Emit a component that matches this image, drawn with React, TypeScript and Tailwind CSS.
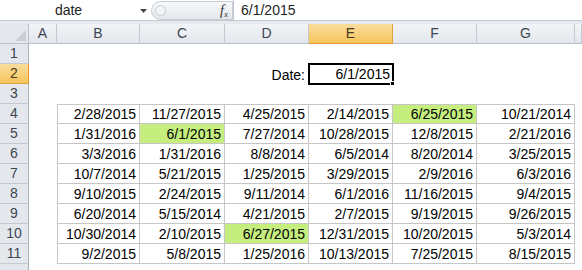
const font = { fontFamily: '"Liberation Sans", Arial, sans-serif' }

const cols = ['A', 'B', 'C', 'D', 'E', 'F', 'G', 'H']

const data: string[][] = [
  ['2/28/2015', '11/27/2015', '4/25/2015', '2/14/2015', '6/25/2015', '10/21/2014'],
  ['1/31/2016', '6/1/2015', '7/27/2014', '10/28/2015', '12/8/2015', '2/21/2016'],
  ['3/3/2016', '1/31/2016', '8/8/2014', '6/5/2014', '8/20/2014', '3/25/2015'],
  ['10/7/2014', '5/21/2015', '1/25/2015', '3/29/2015', '2/9/2016', '6/3/2016'],
  ['9/10/2015', '2/24/2015', '9/11/2014', '6/1/2016', '11/16/2015', '9/4/2015'],
  ['6/20/2014', '5/15/2014', '4/21/2015', '2/7/2015', '9/19/2015', '9/26/2015'],
  ['10/30/2014', '2/10/2015', '6/27/2015', '12/31/2015', '10/20/2015', '5/3/2014'],
  ['9/2/2015', '5/8/2015', '1/25/2016', '10/13/2015', '7/25/2015', '8/15/2015'],
]

// matching cells (row index, col index) inside data
const hits = new Set(['0-4', '1-1', '6-2'])

function ColHeader({ label }: { label: string }) {
  const active = label === 'E'
  return (
    <div
      className={
        'flex items-center justify-center border-r text-[14px] ' +
        (active
          ? 'bg-gradient-to-b from-[#f9dd9c] to-[#f6c55a] border-[#d9a441] border-b border-b-[#f29436] text-[#4a3b1e]'
          : 'bg-gradient-to-b from-[#f2f4f7] to-[#e2e6eb] border-[#c5cad2] border-b border-b-[#b9c0ca] text-[#3c4652]')
      }
    >
      {label !== 'H' && label}
    </div>
  )
}

function RowHeader({ n }: { n: number }) {
  const active = n === 2
  return (
    <div
      className={
        'flex items-center justify-center border-b border-r text-[14px] ' +
        (active
          ? 'bg-gradient-to-b from-[#f9dd9c] to-[#f6c55a] border-b-[#d9a441] border-r-[#f29436] text-[#4a3b1e]'
          : 'bg-[#e4e8ed] border-b-[#c5cad2] border-r-[#a9b2be] text-[#3c4652]')
      }
    >
      {n < 12 && n}
    </div>
  )
}

export default function App() {
  const rows = Array.from({ length: 12 }, (_, i) => i + 1)

  return (
    <div className="w-[582px] h-[270px] overflow-hidden bg-white text-black" style={font}>
      {/* formula bar */}
      <div className="flex h-[21px] border-b border-[#c3c9d1] bg-white">
        <div className="relative flex w-[151px] items-center justify-center text-[14px] text-[#222]">
          <span className="-ml-[14px]">date</span>
          <svg className="absolute right-[4px] top-[9px]" width="7" height="4" viewBox="0 0 7 4">
            <path d="M0 0h7L3.5 4z" fill="#444" />
          </svg>
        </div>
        <div className="flex w-[83px] items-center border-r border-[#c3c9d1] py-[1px]">
          <div className="flex h-[19px] w-full items-center justify-between rounded-l-full border border-[#c8cdd4] bg-gradient-to-b from-[#f7f8fa] to-[#e4e7eb] pl-[3px] pr-[4px]">
            <span className="block h-[11px] w-[11px] rounded-full border border-[#c4c9d0] bg-[#f4f5f7]" />
            <span className="text-[14px] italic text-[#333]" style={{ fontFamily: '"Liberation Serif", serif' }}>
              f<sub className="text-[9px]">x</sub>
            </span>
          </div>
        </div>
        <div className="flex flex-1 items-center pl-[7px] text-[14px] text-[#222]">6/1/2015</div>
      </div>
      <div className="h-[3px] bg-[#e6e9ee]" />

      {/* grid */}
      <div className="grid grid-cols-[29px_28px_83px_85px_84px_84px_84px_98px_1fr] grid-rows-[20px_repeat(12,20px)]">
        <div className="relative border-b border-r border-[#b9c0ca] bg-[#e4e8ed]">
          <svg className="absolute bottom-[2px] right-[2px]" width="11" height="11" viewBox="0 0 11 11">
            <path d="M11 0V11H0z" fill="#c9ced6" />
          </svg>
        </div>
        {cols.map(c => (
          <ColHeader key={c} label={c} />
        ))}

        {rows.map(r => (
          <Row key={r} r={r} />
        ))}
      </div>
    </div>
  )
}

function Row({ r }: { r: number }) {
  const inData = r >= 4 && r <= 11
  const values = inData ? data[r - 4] : null

  return (
    <>
      <RowHeader n={r} />
      {/* column A */}
      <div />
      {cols.slice(1, 7).map((c, ci) => {
        if (values) {
          const hit = hits.has(`${r - 4}-${ci}`)
          return (
            <div
              key={c}
              className={
                'flex items-end justify-end border-b border-r border-[#c6c6c6] pb-[1px] pr-[3px] text-[14px] leading-[16px] ' +
                (r === 4 ? 'border-t ' : '') +
                (ci === 0 ? 'border-l ' : '') +
                (hit ? 'bg-[#c5ee7f]' : 'bg-white')
              }
            >
              {values[ci]}
            </div>
          )
        }
        if (r === 2 && c === 'D') {
          return (
            <div key={c} className="flex items-end justify-end pb-[1px] pr-[4px] text-[14px] leading-[16px]">
              Date:
            </div>
          )
        }
        if (r === 2 && c === 'E') {
          return (
            <div key={c} className="relative">
              <div className="absolute -inset-x-[1px] -top-[1px] -bottom-[1px] flex items-end justify-end border-2 border-black pb-[1px] pr-[2px] text-[14px] leading-[16px]">
                6/1/2015
                <span className="absolute -bottom-[3px] -right-[3px] h-[5px] w-[5px] border border-white bg-black" />
              </div>
            </div>
          )
        }
        return <div key={c} />
      })}
      {/* column H */}
      <div />
    </>
  )
}
